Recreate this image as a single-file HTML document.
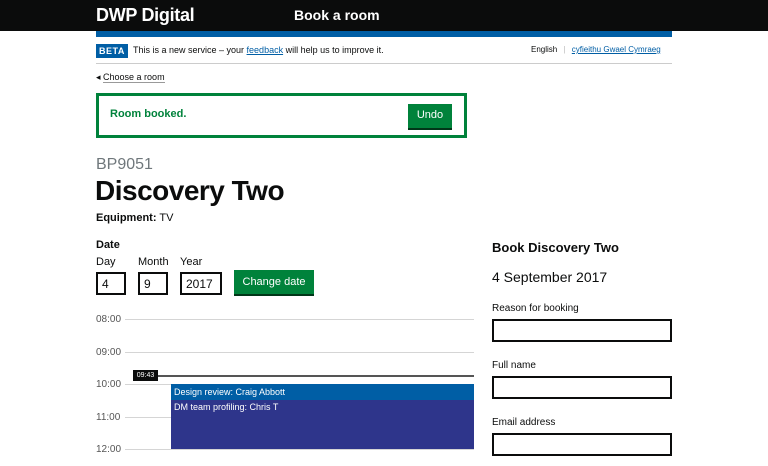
<!DOCTYPE html>
<html><head><meta charset="utf-8"><style>
*{margin:0;padding:0;box-sizing:border-box}
body{width:768px;height:466px;overflow:hidden;background:#fff;font-family:"Liberation Sans",sans-serif;color:#0b0c0c;position:relative}
.a{position:absolute;white-space:nowrap}
.inp{position:absolute;border:2px solid #0b0c0c;background:#fff;font-size:12px;padding:3px 4px;line-height:14px}
.hl{position:absolute;height:1px;background:#d5d5d5;left:125px;width:349px}
.t{position:absolute;left:96px;font-size:10px;color:#555}
</style></head><body>
<div class="a" style="left:0;top:0;width:768px;height:31px;background:#0b0c0c"></div>
<div class="a" style="left:96px;top:5px;color:#fff;font-weight:bold;font-size:18px;letter-spacing:-0.3px">DWP Digital</div>
<div class="a" style="left:294px;top:7px;color:#fff;font-weight:bold;font-size:14px">Book a room</div>
<div class="a" style="left:96px;top:31px;width:576px;height:6px;background:#005ea5"></div>
<div class="a" style="left:96px;top:44px;background:#005ea5;color:#fff;font-weight:bold;font-size:9px;padding:2px 3px;letter-spacing:0.5px">BETA</div>
<div class="a" style="left:133px;top:45px;font-size:9px">This is a new service – your <span style="color:#005ea5;text-decoration:underline">feedback</span> will help us to improve it.</div>
<div class="a" style="left:531px;top:45px;font-size:8px">English <span style="color:#bbb;margin:0 4px">|</span> <span style="color:#005ea5;text-decoration:underline">cyfieithu Gwael Cymraeg</span></div>
<div class="a" style="left:96px;top:63px;width:576px;height:1px;background:#ccc"></div>
<div class="a" style="left:96px;top:72px;font-size:9px">◂ <span style="border-bottom:1px solid #999">Choose a room</span></div>
<div class="a" style="left:96px;top:93px;width:371px;height:45px;border:3px solid #00823b"></div>
<div class="a" style="left:110px;top:108px;font-size:11px;font-weight:bold;color:#00823b">Room booked.</div>
<div class="a" style="left:408px;top:104px;width:44px;height:24px;background:#00823b;color:#fff;font-size:11px;text-align:center;line-height:23px;box-shadow:0 2px 0 #003618">Undo</div>
<div class="a" style="left:96px;top:156px;font-size:16px;color:#6f777b">BP9051</div>
<div class="a" style="left:95px;top:175px;font-size:28px;font-weight:bold;letter-spacing:-0.5px">Discovery Two</div>
<div class="a" style="left:96px;top:212px;font-size:11px"><b>Equipment:</b> TV</div>
<div class="a" style="left:96px;top:239px;font-size:11px;font-weight:bold">Date</div>
<div class="a" style="left:96px;top:256px;font-size:11px">Day</div>
<div class="a" style="left:138px;top:256px;font-size:11px">Month</div>
<div class="a" style="left:180px;top:256px;font-size:11px">Year</div>
<div class="inp" style="left:96px;top:272px;width:30px;height:23px">4</div>
<div class="inp" style="left:138px;top:272px;width:30px;height:23px">9</div>
<div class="inp" style="left:180px;top:272px;width:42px;height:23px">2017</div>
<div class="a" style="left:234px;top:270px;width:80px;height:24px;background:#00823b;color:#fff;font-size:11px;text-align:center;line-height:24px;box-shadow:0 2px 0 #003618">Change date</div>
<div class="t" style="top:314px">08:00</div><div class="hl" style="top:319px"></div>
<div class="t" style="top:347px">09:00</div><div class="hl" style="top:352px"></div>
<div class="t" style="top:379px">10:00</div><div class="hl" style="top:384px"></div>
<div class="t" style="top:412px">11:00</div><div class="hl" style="top:417px"></div>
<div class="t" style="top:444px">12:00</div><div class="hl" style="top:449px"></div>
<div class="a" style="left:133px;top:375px;width:341px;height:2px;background:#555"></div>
<div class="a" style="left:133px;top:370px;width:25px;height:11px;background:#0b0c0c;color:#fff;font-size:7px;line-height:11px;text-align:center">09:43</div>
<div class="a" style="left:171px;top:384px;width:303px;height:16px;background:#005ea5;color:#fff;font-size:9px;padding:3px 3px">Design review: Craig Abbott</div>
<div class="a" style="left:171px;top:400px;width:303px;height:49px;background:#2e358b;color:#fff;font-size:9px;padding:2px 3px">DM team profiling: Chris T</div>
<div class="a" style="left:492px;top:240px;font-size:13px;font-weight:bold">Book Discovery Two</div>
<div class="a" style="left:492px;top:269px;font-size:14px">4 September 2017</div>
<div class="a" style="left:492px;top:303px;font-size:10px">Reason for booking</div>
<div class="inp" style="left:492px;top:319px;width:180px;height:23px"></div>
<div class="a" style="left:492px;top:360px;font-size:10px">Full name</div>
<div class="inp" style="left:492px;top:376px;width:180px;height:23px"></div>
<div class="a" style="left:492px;top:417px;font-size:10px">Email address</div>
<div class="inp" style="left:492px;top:433px;width:180px;height:23px"></div>
</body></html>
